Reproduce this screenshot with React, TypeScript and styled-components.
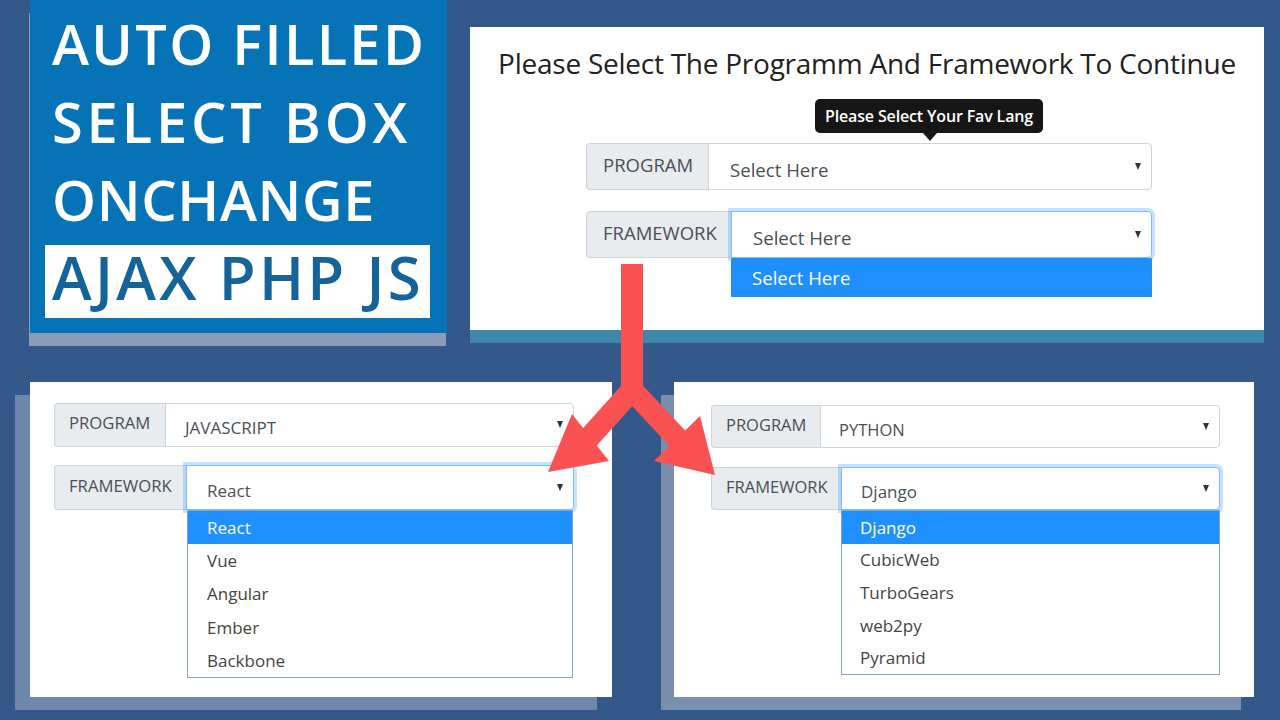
import React from 'react';
import styled, { createGlobalStyle } from 'styled-components';

const GlobalStyle = createGlobalStyle`
  html, body {
    margin: 0;
    padding: 0;
    background: #35588a;
  }
  * {
    box-sizing: border-box;
  }
`;

const UI_FONT = `"Open Sans", "Noto Sans", sans-serif`;

const Page = styled.div`
  position: relative;
  width: 1280px;
  height: 720px;
  overflow: hidden;
  background: #35588a;
  display: flex;
  flex-direction: column;
  font-family: ${UI_FONT};
`;

const TopRow = styled.div`
  display: flex;
  align-items: flex-start;
`;

const BottomRow = styled.div`
  display: flex;
  align-items: flex-start;
  margin-top: 49px;
`;

const TitleCard = styled.div`
  margin-left: 30px;
  width: 417px;
  height: 333px;
  padding: 4px 0 0 22px;
  background: #0673b7;
  box-shadow: -1px 13px 0 #8a9cba;
`;

const TitleLine = styled.div<{ $spacing: number }>`
  font: 600 56px/78px "Open Sans", "Liberation Sans", sans-serif;
  letter-spacing: ${p => p.$spacing}px;
  color: #ffffff;
  white-space: nowrap;
`;

const TitleTag = styled(TitleLine)`
  margin: 7px 0 0 -7px;
  width: 385px;
  height: 73px;
  padding-left: 7px;
  font-size: 60px;
  line-height: 65px;
  background: #ffffff;
  color: #14649a;
`;

const TopPanel = styled.div`
  margin: 27px 0 0 23px;
  width: 794px;
  height: 303px;
  padding-top: 18px;
  background: #ffffff;
  box-shadow: 0 13px 0 #3e87a8;
`;

const Heading = styled.h1`
  margin: 0;
  font: 400 28px/36px ${UI_FONT};
  color: #222;
  text-align: center;
  letter-spacing: -0.25px;
`;

const Form = styled.div<{ $width: number; $gap: number; $top?: number; $left?: number }>`
  display: flex;
  flex-direction: column;
  width: ${p => p.$width}px;
  gap: ${p => p.$gap}px;
  margin-top: ${p => p.$top || 0}px;
  margin-left: ${p => p.$left || 0}px;
`;

const BottomPanel = styled.div<{ $left: number; $width: number; $pad: string; $shadow: string }>`
  margin-left: ${p => p.$left}px;
  width: ${p => p.$width}px;
  height: 315px;
  padding: ${p => p.$pad};
  background: #ffffff;
  box-shadow: ${p => p.$shadow};
`;

const Group = styled.div<{ $height: number }>`
  display: flex;
  height: ${p => p.$height}px;
`;

const Addon = styled.div<{ $width: number; $size: number; $pad: number }>`
  flex: none;
  width: ${p => p.$width}px;
  display: flex;
  align-items: center;
  padding: 0 0 5px ${p => p.$pad}px;
  background: #e9ecef;
  border: 1px solid #ced4da;
  border-right: none;
  border-radius: 4px 0 0 4px;
  color: #495057;
  font-size: ${p => p.$size}px;
  white-space: nowrap;
`;

const SelectWrap = styled.div`
  position: relative;
  flex: 1;
`;

const SelectBox = styled.div<{ $focus?: boolean; $size: number; $pad: number }>`
  height: 100%;
  display: flex;
  align-items: center;
  padding: 5px 0 0 ${p => p.$pad}px;
  border: 1px solid ${p => (p.$focus ? '#80bdff' : '#ced4da')};
  border-radius: 0 4px 4px 0;
  box-shadow: ${p => (p.$focus ? '0 0 0 3px rgba(0, 123, 255, 0.22)' : 'none')};
  background: #fff;
  color: #495057;
  font-size: ${p => p.$size}px;
  white-space: nowrap;
`;

const Caret = styled.span`
  margin: 0 10px 6px auto;
  width: 0;
  height: 0;
  border-left: 3.5px solid transparent;
  border-right: 3.5px solid transparent;
  border-top: 7px solid #333;
`;

const Menu = styled.div<{ $bordered?: boolean; $inset?: number }>`
  position: absolute;
  top: 100%;
  left: ${p => p.$inset || 0}px;
  right: ${p => p.$inset || 0}px;
  background: #fff;
  border: ${p => (p.$bordered ? '1px solid #8aa2c6' : 'none')};
  z-index: 2;
`;

const Option = styled.div<{ $active?: boolean; $height: number; $size: number; $pad: number }>`
  height: ${p => p.$height}px;
  display: flex;
  align-items: center;
  padding-left: ${p => p.$pad}px;
  background: ${p => (p.$active ? '#1e90ff' : '#fff')};
  color: ${p => (p.$active ? '#fff' : '#444')};
  font-size: ${p => p.$size}px;
`;

const Tooltip = styled.div`
  position: absolute;
  left: 107px;
  bottom: calc(100% + 10px);
  height: 34px;
  display: flex;
  align-items: center;
  padding: 0 10px;
  background: #161616;
  border-radius: 5px;
  color: #fff;
  font: 600 16px ${UI_FONT};
  letter-spacing: -0.15px;
  white-space: nowrap;

  &::after {
    content: '';
    position: absolute;
    top: 100%;
    left: 108px;
    border-left: 7px solid transparent;
    border-right: 7px solid transparent;
    border-top: 8px solid #161616;
  }
`;

const ArrowLayer = styled.svg`
  position: absolute;
  left: 0;
  top: 0;
  pointer-events: none;
  z-index: 5;
`;

type SelectProps = {
  label: string;
  value: string;
  labelWidth: number;
  labelSize: number;
  height: number;
  size: number;
  labelPad: number;
  valuePad: number;
  focus?: boolean;
  children?: React.ReactNode;
};

const SelectGroup = ({ label, value, labelWidth, labelSize, height, size, labelPad, valuePad, focus, children }: SelectProps) => (
  <Group $height={height}>
    <Addon $width={labelWidth} $size={labelSize} $pad={labelPad}>{label}</Addon>
    <SelectWrap>
      <SelectBox $focus={focus} $size={size} $pad={valuePad}>
        {value}
        <Caret />
      </SelectBox>
      {children}
    </SelectWrap>
  </Group>
);

const jsFrameworks = ['React', 'Vue', 'Angular', 'Ember', 'Backbone'];
const pyFrameworks = ['Django', 'CubicWeb', 'TurboGears', 'web2py', 'Pyramid'];

const App = () => {
  return (
    <>
      <GlobalStyle />
      <Page>
        <TopRow>
          <TitleCard>
            <TitleLine $spacing={2.3}>AUTO FILLED</TitleLine>
            <TitleLine $spacing={3.8}>SELECT BOX</TitleLine>
            <TitleLine $spacing={0.6}>ONCHANGE</TitleLine>
            <TitleTag $spacing={3.3}>AJAX PHP JS</TitleTag>
          </TitleCard>

          <TopPanel>
            <Heading>Please Select The Programm And Framework To Continue</Heading>
            <Form $width={566} $gap={21} $top={62} $left={116}>
              <Group $height={47}>
                <Addon $width={122} $size={18.5} $pad={16}>PROGRAM</Addon>
                <SelectWrap>
                  <Tooltip>Please Select Your Fav Lang</Tooltip>
                  <SelectBox $size={18.6} $pad={21}>
                    Select Here
                    <Caret />
                  </SelectBox>
                </SelectWrap>
              </Group>
              <SelectGroup label="FRAMEWORK" value="Select Here" labelWidth={145} labelSize={18.5} height={47} size={18.6} labelPad={16} valuePad={21} focus>
                <Menu>
                  <Option $active $height={39} $size={18.6} $pad={21}>Select Here</Option>
                </Menu>
              </SelectGroup>
            </Form>
          </TopPanel>
        </TopRow>

        <BottomRow>
          <BottomPanel $left={30} $width={582} $pad="21px 0 0 24px" $shadow="-15px 13px 0 #6f87aa">
            <Form $width={520} $gap={18}>
              <SelectGroup label="PROGRAM" value="JAVASCRIPT" labelWidth={111} labelSize={16.7} height={44} size={17} labelPad={14} valuePad={19} />
              <SelectGroup label="FRAMEWORK" value="React" labelWidth={132} labelSize={16.7} height={45} size={17} labelPad={14} valuePad={20} focus>
                <Menu $bordered $inset={1}>
                  {jsFrameworks.map((f, i) => (
                    <Option key={f} $active={i === 0} $height={33.2} $size={17} $pad={19}>{f}</Option>
                  ))}
                </Menu>
              </SelectGroup>
            </Form>
          </BottomPanel>

          <BottomPanel $left={62} $width={580} $pad="23px 0 0 37px" $shadow="-13px 13px 0 #7a8fb0">
            <Form $width={509} $gap={19}>
              <SelectGroup label="PROGRAM" value="PYTHON" labelWidth={109} labelSize={16.5} height={43} size={16.5} labelPad={14} valuePad={18} />
              <SelectGroup label="FRAMEWORK" value="Django" labelWidth={130} labelSize={16.5} height={43} size={17} labelPad={14} valuePad={19} focus>
                <Menu $bordered>
                  {pyFrameworks.map((f, i) => (
                    <Option key={f} $active={i === 0} $height={32.6} $size={17} $pad={18}>{f}</Option>
                  ))}
                </Menu>
              </SelectGroup>
            </Form>
          </BottomPanel>
        </BottomRow>

        <ArrowLayer width="1280" height="720" viewBox="0 0 1280 720">
          <g fill="#fa5252" stroke="#fa5252">
            <path d="M632 264 V392 M632 390 L588 439 M632 390 L679 440" fill="none" strokeWidth="22" strokeLinejoin="round" />
            <polygon points="548,472 572,414 609,461" stroke="none" />
            <polygon points="715,475 654,461 700,416" stroke="none" />
          </g>
        </ArrowLayer>
      </Page>
    </>
  );
};

export default App;
